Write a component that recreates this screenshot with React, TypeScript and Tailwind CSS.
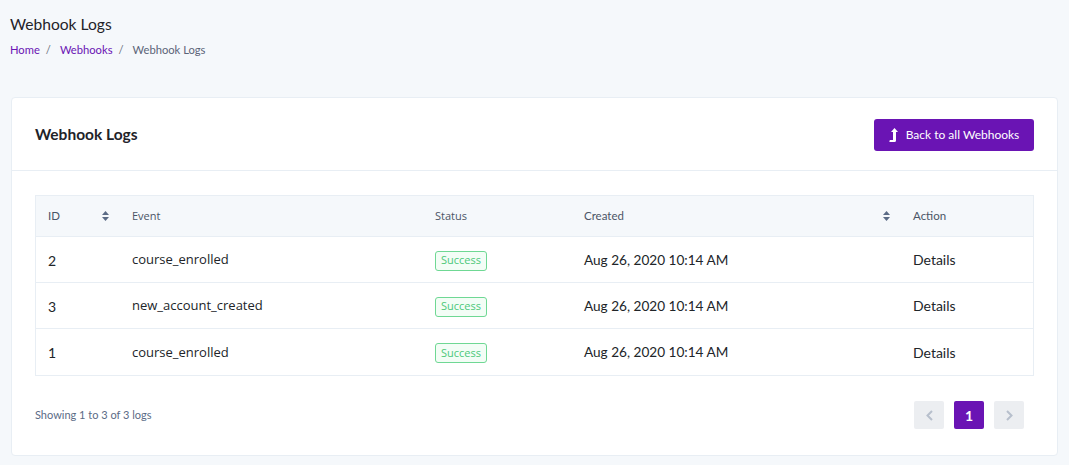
import React from "react";

const SortIcon = () => (
  <svg width="7" height="10" viewBox="0 0 7 10" className="text-[#5b6b86]">
    <path d="M3.5 0 L7 4 H0 Z" fill="currentColor" />
    <path d="M3.5 10 L7 6 H0 Z" fill="currentColor" />
  </svg>
);

const LevelUp = () => (
  <svg width="9" height="14" viewBox="0 0 9 14">
    <path d="M5.5 0 L9 4 H7 V12.5 Q7 14 5.5 14 H1 Q0 14 0.4 13 L1 12 H4 V4 H2 Z" fill="white" />
  </svg>
);

const rows = [
  { id: "2", event: "course_enrolled" },
  { id: "3", event: "new_account_created" },
  { id: "1", event: "course_enrolled" },
];

export default function App() {
  return (
    <div className="w-[1069px] h-[465px] bg-[#f5f8fb] overflow-hidden font-['Lato',sans-serif] text-[#212529]">
      <div className="pl-[10px] pt-[14px]">
        <h1 className="text-[15.6px] leading-[20px] text-[#1f2329]">Webhook Logs</h1>
        <div className="mt-[8px] text-[11.2px] leading-[16px] flex">
          <span className="text-[#6a14b4]">Home</span>
          <span className="text-[#6b7280] pl-[6px] pr-[9px]">/</span>
          <span className="text-[#6a14b4]">Webhooks</span>
          <span className="text-[#6b7280] pl-[6px] pr-[9px]">/</span>
          <span className="text-[#5b6478]">Webhook Logs</span>
        </div>
      </div>

      <div className="ml-[11px] mt-[39px] w-[1047px] h-[359px] bg-white border border-[#e8eef4] rounded-[4px]">
        <div className="h-[73px] border-b border-[#e8eef4] flex items-center justify-between pl-[23px] pr-[23px]">
          <h2 className="text-[15.5px] font-bold text-[#1f2329] mt-[2px]">Webhook Logs</h2>
          <button className="h-[32px] w-[160px] bg-[#6a14b4] rounded-[3px] flex items-center justify-center gap-[8px] text-white text-[12px] mt-[1px]">
            <LevelUp />
            <span>Back to all Webhooks</span>
          </button>
        </div>

        <div className="mx-[23px] mt-[24px] border border-[#e8eef4]">
          <div className="grid grid-cols-[85px_303px_149px_329px_1fr] h-[41px] bg-[#f5f8fb] items-center text-[11.5px] text-[#4b5566] border-b border-[#e8eef4]">
            <div className="pl-[12px] pr-[12px] flex items-center justify-between">
              <span>ID</span>
              <SortIcon />
            </div>
            <div className="pl-[11px] font-['Open_Sans',sans-serif] text-[11px]">Event</div>
            <div className="pl-[11px] font-['Open_Sans',sans-serif] text-[11px]">Status</div>
            <div className="pl-[11px] pr-[12px] flex items-center justify-between">
              <span>Created</span>
              <SortIcon />
            </div>
            <div className="pl-[11px]">Action</div>
          </div>
          {rows.map((r, i) => (
            <div
              key={i}
              className={`grid grid-cols-[85px_303px_149px_329px_1fr] h-[46px] items-center text-[14px] text-[#212529] ${i < rows.length - 1 ? "border-b border-[#e8eef4]" : ""}`}
            >
              <div className="pl-[12px] pt-[1px]">{r.id}</div>
              <div className="pl-[11px] pt-[1px] font-['Open_Sans',sans-serif] text-[13px]">{r.event}</div>
              <div className="pl-[11px]">
                <span className="inline-flex items-center h-[20px] px-[5px] border border-[#6fd894] bg-[#f3fdf6] rounded-[3px] text-[11px] text-[#4cc879] font-['Open_Sans',sans-serif]">
                  Success
                </span>
              </div>
              <div className="pl-[11px] pt-[1px] text-[13.6px]">Aug 26, 2020 10:14 AM</div>
              <div className="pl-[11px]">Details</div>
            </div>
          ))}
        </div>

        <div className="flex items-center justify-between pl-[23px] pr-[33px] mt-[25px]">
          <span className="text-[11px] text-[#5b6b86]">Showing 1 to 3 of 3 logs</span>
          <div className="flex gap-[10px]">
            <div className="w-[30px] h-[28px] bg-[#eceef1] rounded-[2px] flex items-center justify-center">
              <svg width="7" height="11" viewBox="0 0 7 11">
                <path d="M6 1 L1.5 5.5 L6 10" stroke="#b7bfcc" strokeWidth="2" fill="none" />
              </svg>
            </div>
            <div className="w-[30px] h-[28px] bg-[#6a14b4] rounded-[2px] flex items-center justify-center text-white text-[14px] font-bold">
              1
            </div>
            <div className="w-[30px] h-[28px] bg-[#eceef1] rounded-[2px] flex items-center justify-center">
              <svg width="7" height="11" viewBox="0 0 7 11">
                <path d="M1 1 L5.5 5.5 L1 10" stroke="#b7bfcc" strokeWidth="2" fill="none" />
              </svg>
            </div>
          </div>
        </div>
      </div>
    </div>
  );
}
